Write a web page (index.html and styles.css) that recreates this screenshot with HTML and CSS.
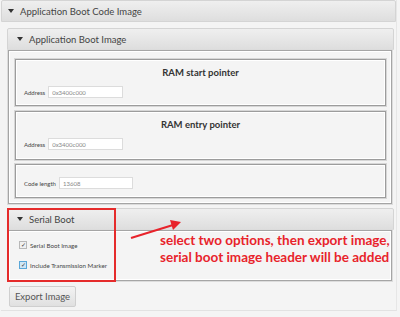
FILE: index.html
```html
<!DOCTYPE html>
<html lang="en">
<head>
  <meta charset="UTF-8">
  <title>Application Boot Code Image</title>
  <link rel="stylesheet" href="styles.css">
</head>
<body>
  <div class="window">
    <!-- Outer titled pane -->
    <div class="pane-head outer-head"><span class="caret"></span>Application Boot Code Image</div>
    <div class="outer-body">

      <div class="pane-head"><span class="caret"></span>Application Boot Image</div>
      <div class="pane-body boot-body">
        <div class="group">
          <div class="group-title">RAM start pointer</div>
          <div class="field">
            <label>Address</label>
            <input type="text" value="0x3400c000">
          </div>
        </div>
        <div class="group">
          <div class="group-title">RAM entry pointer</div>
          <div class="field">
            <label>Address</label>
            <input type="text" value="0x3400c000">
          </div>
        </div>
        <div class="group group-small">
          <div class="field">
            <label>Code length</label>
            <input type="text" class="wide" value="13608">
          </div>
        </div>
      </div>

      <div class="serial">
        <div class="pane-head"><span class="caret"></span>Serial Boot</div>
        <div class="pane-body serial-body">
          <div class="checks">
            <div class="check"><span class="box">&#10003;</span>Serial Boot Image</div>
            <div class="check"><span class="box focus">&#10003;</span>Include Transmission Marker</div>
          </div>
          <div class="note">select two options, then export image,<br>serial boot image header will be added</div>
        </div>
        <!-- annotation overlay -->
        <div class="highlight"></div>
        <svg class="arrow" width="60" height="24" viewBox="0 0 60 24">
          <line x1="2" y1="20" x2="44" y2="7" stroke="#e8232b" stroke-width="2"/>
          <polygon points="52,4 41,2 44,12" fill="#e8232b"/>
        </svg>
      </div>

      <button class="export">Export Image</button>
    </div>
  </div>
</body>
</html>
```

FILE: styles.css
```css
* {
  margin: 0;
  padding: 0;
  box-sizing: border-box;
}

body {
  background: #f4f4f4;
  font-family: 'Lato', 'Open Sans', sans-serif;
  color: #333;
}

.window {
  width: 396px;
  height: 311px;
  margin-left: 1px;
  border-bottom: 1px solid #e2e2e2;
  border-right: 1px solid #e6e6e6;
}

/* Titled pane headers */
.pane-head {
  height: 22px;
  display: flex;
  align-items: center;
  padding-left: 9px;
  font-size: 9.5px;
  color: #444;
  background: linear-gradient(#efefef, #dedede);
  border: 1px solid #d4d4d4;
  border-radius: 2px 2px 0 0;
}

.outer-head {
  padding-left: 6px;
}

.caret {
  width: 0;
  height: 0;
  border-left: 3px solid transparent;
  border-right: 3px solid transparent;
  border-top: 4px solid #333;
  margin-right: 6px;
}

.outer-body {
  padding: 6px 2px 0 6px;
}

.pane-body {
  margin: 0 2px 0 1px;
  border: 1px solid #a5a5a5;
  box-shadow: inset 0 0 0 1px #fff, 0 0 0 1px #dcdcdc;
}

.boot-body {
  padding: 8px 5px 5px 6px;
  display: flex;
  flex-direction: column;
  gap: 5px;
}

/* Grouped boxes */
.group {
  height: 47px;
  border: 1px solid #9c9c9c;
  box-shadow: inset 0 0 0 1px #fff, 0 0 0 1px #d6d6d6;
  padding: 5px 8px 0 8px;
}

.group + .group {
  height: 49px;
}

.group.group-small {
  height: 34px;
  padding-top: 12px;
  margin-top: -1px;
}

.group-title {
  text-align: center;
  font-weight: 700;
  font-size: 9.5px;
  color: #333;
  height: 15px;
  line-height: 15px;
}

.field {
  display: flex;
  align-items: center;
  gap: 3px;
  margin-top: 6px;
}

.group-small .field {
  margin-top: 0;
}

.field label {
  font-size: 6px;
  color: #444;
}

.field input {
  width: 75px;
  height: 12px;
  border: 1px solid #dcdcdc;
  background: #fff;
  font-family: inherit;
  font-size: 6px;
  color: #888;
  padding-left: 3px;
}

.field input.wide {
  width: 74px;
}

/* Serial boot section */
.serial {
  position: relative;
  margin-top: 4px;
}

.serial-body {
  height: 51px;
  display: flex;
  padding: 10px 0 0 10px;
}

.checks {
  width: 141px;
  display: flex;
  flex-direction: column;
  gap: 12px;
}

.check {
  display: flex;
  align-items: center;
  gap: 3px;
  font-size: 6.2px;
  color: #444;
}

.box {
  width: 8px;
  height: 8px;
  border: 1px solid #b8b8b8;
  background: #f0f0f0;
  font-size: 6px;
  line-height: 6px;
  text-align: center;
  color: #333;
}

.box.focus {
  border-color: #5aa7d8;
  background: #cfe6f5;
}

.note {
  font-weight: 700;
  font-size: 13.5px;
  line-height: 17px;
  color: #e8232b;
  margin-top: -9px;
}

.highlight {
  position: absolute;
  left: 0;
  top: 0;
  width: 109px;
  height: 74px;
  border: 2px solid #e52b2b;
}

.arrow {
  position: absolute;
  left: 122px;
  top: 10px;
}

.export {
  margin: 5px 0 0 2px;
  width: 67px;
  height: 21px;
  font-family: inherit;
  font-size: 9.5px;
  color: #555;
  background: linear-gradient(#f3f3f3, #e0e0e0);
  border: 1px solid #cfcfcf;
  border-radius: 2px;
}
```
